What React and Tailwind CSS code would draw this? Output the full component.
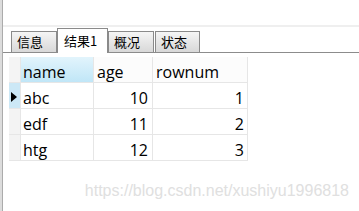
import React from "react";

const TABS = [
  { label: "信息", width: "w-[46px]" },
  { label: "结果1", width: "w-[51px]", active: true },
  { label: "概况", width: "w-[46px]" },
  { label: "状态", width: "w-[45px]", gap: true },
];

const ROWS = [
  { name: "abc", age: 10, rownum: 1, current: true },
  { name: "edf", age: 11, rownum: 2 },
  { name: "htg", age: 12, rownum: 3 },
];

function Tab({ label, width, active, gap }) {
  if (active) {
    return (
      <div
        className={`${width} h-[25px] -mb-px border border-b-0 border-[#8a8a8a] bg-white pl-[6px] pt-[3px] text-[13px] leading-[18px] text-black`}
      >
        {label}
      </div>
    );
  }
  return (
    <div
      className={`${width} ${gap ? "ml-px" : ""} h-[21px] border border-b-0 border-[#8a8a8a] bg-gradient-to-b from-[#f5f5f5] to-[#d8d8d8] pl-[5px] pt-[1px] text-[13px] leading-[18px] text-black`}
    >
      {label}
    </div>
  );
}

const cell = "h-[26px] border-b border-r border-[#e6e6e6] leading-[26px] pt-[2px]";

export default function App() {
  return (
    <div
      className="relative flex h-[211px] w-[359px] overflow-hidden bg-white"
      style={{ fontFamily: '"Open Sans", "Noto Sans CJK SC", sans-serif' }}
    >
      {/* left frame edge */}
      <div className="h-full w-[3px] border-r border-[#ababab] bg-[#dcdcdc]" />

      <div className="flex flex-1 flex-col">
        <div className="h-[25px] bg-white" />
        <div className="h-[2px] bg-[#efefef]" />

        {/* tab strip */}
        <div
          className="flex h-[26px] items-end border-b border-[#8c8c8c] pl-[8px]"
          style={{ fontFamily: '"Noto Sans CJK SC", "Open Sans", sans-serif' }}
        >
          {TABS.map((tab) => (
            <Tab key={tab.label} {...tab} />
          ))}
        </div>

        {/* result grid */}
        <div className="ml-[6px] mt-[4px] grid w-max grid-cols-[12px_73px_59px_95px] text-[16px] text-black">
          <div className={`${cell} bg-[#f4f4f4]`} />
          <div className={`${cell} bg-gradient-to-b from-[#e2f4fc] to-[#c0e6f7] pl-[2px]`}>name</div>
          <div className={`${cell} bg-[#fcfcfc] pl-[3px]`}>age</div>
          <div className={`${cell} bg-[#fcfcfc] pl-[3px]`}>rownum</div>

          {ROWS.map((row) => (
            <React.Fragment key={row.name}>
              <div
                className={`${cell} flex items-center justify-start pl-[2px] ${
                  row.current ? "bg-[#cce8f6]" : "bg-[#f3f3f3]"
                }`}
              >
                {row.current && (
                  <svg width="6" height="10" viewBox="0 0 6 10">
                    <path d="M0 0 L6 5 L0 10 Z" fill="#000" />
                  </svg>
                )}
              </div>
              <div className={`${cell} pl-[2px]`}>{row.name}</div>
              <div className={`${cell} pr-[4px] text-right`}>{row.age}</div>
              <div className={`${cell} pr-[3px] text-right`}>{row.rownum}</div>
            </React.Fragment>
          ))}
        </div>
      </div>

      {/* watermark */}
      <div
        className="absolute bottom-[12px] right-[10px] text-[16px] leading-none text-[#e0e0e0]"
        style={{ fontFamily: '"Liberation Sans", Arial, sans-serif' }}
      >
        https://blog.csdn.net/xushiyu1996818
      </div>
    </div>
  );
}
